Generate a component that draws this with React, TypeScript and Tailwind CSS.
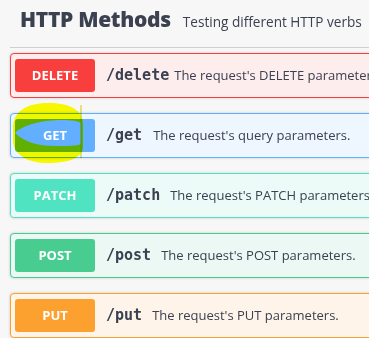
import React from 'react'

const ops = [
  { method: 'DELETE', path: '/delete', desc: "The request's DELETE parameters.", gap: 'pr-[5px]', border: 'border-[#f93e3e]', bg: 'bg-[#feeded]', btn: 'bg-[#f93e3e]' },
  { method: 'GET', path: '/get', desc: "The request's query parameters.", gap: 'pr-[11px]', border: 'border-[#61affe]', bg: 'bg-[#eef6ff]', btn: 'bg-[#61affe]' },
  { method: 'PATCH', path: '/patch', desc: "The request's PATCH parameters.", gap: 'pr-[10px]', border: 'border-[#50e3c2]', bg: 'bg-[#ecfbf8]', btn: 'bg-[#50e3c2]' },
  { method: 'POST', path: '/post', desc: "The request's POST parameters.", gap: 'pr-[10px]', border: 'border-[#49cc90]', bg: 'bg-[#ecf8f3]', btn: 'bg-[#49cc90]' },
  { method: 'PUT', path: '/put', desc: "The request's PUT parameters.", gap: 'pr-[10px]', border: 'border-[#fca130]', bg: 'bg-[#fff4e9]', btn: 'bg-[#fca130]' },
]

function OpBlock({ op }: { op: (typeof ops)[number] }) {
  return (
    <div
      className={`flex items-center h-[45px] w-[420px] mb-[15px] pl-[4px] border rounded-[4px] shadow-[0_0_3px_rgba(0,0,0,0.19)] whitespace-nowrap ${op.border} ${op.bg}`}
    >
      <span
        className={`w-[80px] h-[33px] shrink-0 flex items-center justify-center rounded-[3px] text-white font-bold text-[13px] font-['Open_Sans',sans-serif] ${op.btn}`}
      >
        {op.method}
      </span>
      <span className={`pl-[11px] text-[15px] font-bold text-[#3b4151] font-['DejaVu_Sans_Mono',monospace] ${op.gap}`}>
        {op.path}
      </span>
      <span className="text-[13px] text-[#3b4151] font-['Open_Sans',sans-serif]">{op.desc}</span>
    </div>
  )
}

export default function App() {
  return (
    <div className="relative w-[369px] h-[338px] overflow-hidden bg-[#f7f7f7] pl-[10px]">
      {/* Section header */}
      <div className="flex items-baseline h-[48px] pt-[9px] pl-[10px] border-b border-[#cfcfcf] whitespace-nowrap font-['Open_Sans',sans-serif] text-[#3b4151]">
        <span className="text-[21px] leading-none font-extrabold tracking-[-0.3px]">HTTP Methods</span>
        <span className="ml-[12px] text-[13.6px]">Testing different HTTP verbs</span>
      </div>

      <div className="mt-[5px]">
        {ops.map((op) => (
          <OpBlock key={op.method} op={op} />
        ))}
      </div>

      {/* Highlighter mark around GET */}
      <svg
        className="absolute left-0 top-0 pointer-events-none mix-blend-multiply"
        width="369"
        height="338"
        viewBox="0 0 369 338"
      >
        <path
          fillRule="evenodd"
          fill="#ffff00"
          d="M13,128 C13,112 26,103 48,103 C70,103 83,110 83,124 L83,148 C82,158 68,163 48,163 C28,163 13,155 13,140 Z M15,133 C24,124 44,120 62,120 C72,120 78,121 81,123 L81,144 C76,146 68,146 55,146 C38,146 24,142 15,133 Z"
        />
        <line x1="81" y1="105" x2="81" y2="158" stroke="#d6d600" strokeWidth="1" />
      </svg>
    </div>
  )
}
